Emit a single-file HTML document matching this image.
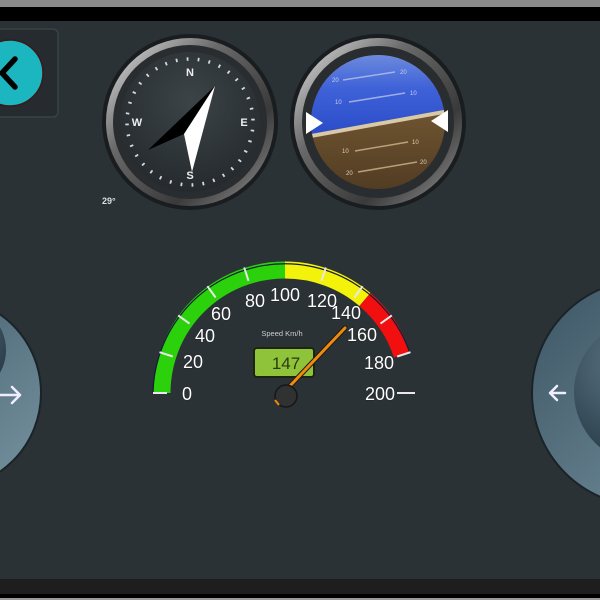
<!DOCTYPE html>
<html><head><style>
html,body{margin:0;padding:0;width:600px;height:600px;overflow:hidden;background:#2a3236;}
svg{display:block}
text{font-family:"Liberation Sans",sans-serif}
</style></head><body>
<svg width="600" height="600" viewBox="0 0 600 600" xmlns="http://www.w3.org/2000/svg">
<defs>
<linearGradient id="bez" x1="0" y1="0" x2="1" y2="1">
<stop offset="0" stop-color="#e8e8e8"/><stop offset="0.35" stop-color="#6a6a6a"/><stop offset="0.7" stop-color="#3a3a3a"/><stop offset="1" stop-color="#9a9a9a"/>
</linearGradient>
<radialGradient id="dial" cx="0.5" cy="0.35" r="0.7">
<stop offset="0" stop-color="#3d4447"/><stop offset="1" stop-color="#22282b"/>
</radialGradient>
<linearGradient id="sky" x1="0" y1="0" x2="0" y2="1">
<stop offset="0" stop-color="#7f9ce0"/><stop offset="0.5" stop-color="#3f62d8"/><stop offset="1" stop-color="#2a4bc8"/>
</linearGradient>
<linearGradient id="gnd" x1="0" y1="0" x2="0" y2="1">
<stop offset="0" stop-color="#8a6a3c"/><stop offset="1" stop-color="#4a3620"/>
</linearGradient>
<linearGradient id="joy" x1="0" y1="0" x2="1" y2="1">
<stop offset="0" stop-color="#3c5564"/><stop offset="1" stop-color="#7793a0"/>
</linearGradient>
<radialGradient id="knob" cx="0.4" cy="0.3" r="0.8">
<stop offset="0" stop-color="#5d7786"/><stop offset="1" stop-color="#223440"/>
</radialGradient>
<clipPath id="attc"><circle cx="378" cy="122" r="67"/></clipPath>
</defs>
<rect x="0" y="0" width="600" height="7" fill="#8a8a8a"/>
<rect x="0" y="7" width="600" height="14" fill="#000"/>
<rect x="0" y="579" width="600" height="21" fill="#1e1e1e"/>
<rect x="0" y="594" width="600" height="4" fill="#000"/>
<rect x="0" y="598" width="600" height="2" fill="#999"/>

<rect x="-10" y="29" width="68" height="88" rx="5" fill="#252b2f" stroke="#3b4247" stroke-width="1.5"/>
<circle cx="10" cy="73" r="33" fill="#1bb6c0" stroke="#3a1a1a" stroke-width="1.5"/>
<path d="M15 59 L2 73 L15 87" fill="none" stroke="#000" stroke-width="5.5" stroke-linecap="round" stroke-linejoin="round"/>

<circle cx="190" cy="122" r="88" fill="#1a1d1f"/>
<circle cx="190" cy="122" r="84" fill="url(#bez)"/>
<circle cx="190" cy="122" r="77" fill="#2a2d2f"/>
<circle cx="190" cy="122" r="70" fill="url(#dial)"/>
<circle cx="190" cy="122" r="63" fill="none" stroke="#d8d8d8" stroke-width="3.5" stroke-dasharray="1.8 9.19" transform="rotate(-3 190 122)"/>
<text x="190" y="76" fill="#eee" font-size="11" font-weight="bold" text-anchor="middle">N</text>
<text x="190" y="179" fill="#eee" font-size="11" font-weight="bold" text-anchor="middle">S</text>
<text x="137" y="126" fill="#eee" font-size="11" font-weight="bold" text-anchor="middle">W</text>
<text x="244" y="126" fill="#eee" font-size="11" font-weight="bold" text-anchor="middle">E</text>
<polygon points="215,86 184,134 148,150" fill="#000"/>
<polygon points="215,86 184,134 192,172" fill="#fff"/>
<text x="102" y="204" fill="#ddd" font-size="9" font-weight="bold">29°</text>

<circle cx="378" cy="122" r="88" fill="#1a1d1f"/>
<circle cx="378" cy="122" r="84" fill="url(#bez)"/>
<circle cx="378" cy="122" r="76" fill="#2a2d2f"/>
<g clip-path="url(#attc)">
<rect x="300" y="40" width="160" height="170" fill="url(#gnd)"/>
<polygon points="300,40 460,40 460,107 300,136" fill="url(#sky)"/>
<polygon points="300,136 460,107 460,111 300,140" fill="#d8c9a8"/>
<g stroke="#b8c4e8" stroke-width="1.5" opacity="0.8">
<line x1="343" y1="80" x2="395" y2="72"/><line x1="349" y1="102" x2="405" y2="93"/>
</g>
<g fill="#c8d0ee" font-size="6"><text x="332" y="82">20</text><text x="400" y="74">20</text><text x="335" y="104">10</text><text x="410" y="95">10</text></g>
<g stroke="#d0b890" stroke-width="1.5" opacity="0.8">
<line x1="355" y1="151" x2="408" y2="142"/><line x1="358" y1="172" x2="417" y2="162"/>
</g>
<g fill="#e0d0b0" font-size="6"><text x="342" y="153">10</text><text x="412" y="144">10</text><text x="346" y="175">20</text><text x="420" y="164">20</text></g>
</g>
<polygon points="306,112 306,134 323,123" fill="#fff"/>
<polygon points="448,110 448,132 431,121" fill="#fff"/>

<path d="M162 393 A123 123 0 0 1 285 270" fill="none" stroke="#2bd10b" stroke-width="17"/>
<path d="M285 270 A123 123 0 0 1 364.9 299.5" fill="none" stroke="#f2f20a" stroke-width="17"/>
<path d="M364.9 299.5 A123 123 0 0 1 402 355" fill="none" stroke="#f20f0f" stroke-width="17"/>
<path d="M153 393 A132 132 0 0 1 409.5 352" fill="none" stroke="#151a3a" stroke-width="1.2"/>
<g stroke="#e8e8e8" stroke-width="2" transform="translate(285 393)">
<line x1="-132" y1="0" x2="-118" y2="0"/>
<line x1="-125.5" y1="-40.8" x2="-112.2" y2="-36.5" />
<line x1="-106.8" y1="-77.6" x2="-95.5" y2="-69.4"/>
<line x1="-77.6" y1="-106.8" x2="-69.4" y2="-95.5"/>
<line x1="-40.8" y1="-125.5" x2="-36.5" y2="-112.2"/>
<line x1="40.8" y1="-125.5" x2="36.5" y2="-112.2"/>
<line x1="77.6" y1="-106.8" x2="69.4" y2="-95.5"/>
<line x1="106.8" y1="-77.6" x2="95.5" y2="-69.4"/>
<line x1="125.5" y1="-40.8" x2="112.2" y2="-36.5"/>
<line x1="112" y1="0" x2="130" y2="0"/>
</g>
<g fill="#fff" font-size="18" text-anchor="middle" stroke="#111" stroke-width="0.6" paint-order="stroke">
<text x="187" y="400">0</text><text x="193" y="368">20</text><text x="205" y="342">40</text>
<text x="221" y="320">60</text><text x="255" y="307">80</text><text x="285" y="301">100</text>
<text x="322" y="307">120</text><text x="346" y="319">140</text><text x="362" y="341">160</text>
<text x="379" y="369">180</text><text x="380" y="400">200</text>
</g>
<text x="282" y="336" fill="#ccc" font-size="7.5" text-anchor="middle">Speed Km/h</text>
<rect x="254" y="348" width="60" height="29" rx="3" fill="#8fc43a" stroke="#1d2410" stroke-width="2"/>
<text x="286" y="369" fill="#2c3a10" font-size="17" text-anchor="middle">147</text>
<line x1="288" y1="388" x2="345" y2="328" stroke="#1a1a1a" stroke-width="5" stroke-linecap="round"/>
<line x1="288" y1="388" x2="345" y2="328" stroke="#f08a0a" stroke-width="3" stroke-linecap="round"/>
<circle cx="286" cy="396" r="11" fill="#2f3133" stroke="#161616" stroke-width="1.5"/>
<line x1="275" y1="400" x2="279" y2="405" stroke="#f08a0a" stroke-width="2"/>

<circle cx="-55" cy="393" r="96" fill="url(#joy)" stroke="#1a2328" stroke-width="2"/>
<circle cx="-40" cy="350" r="46" fill="url(#knob)"/>
<path d="M0 395 H20 M12 387 L20 395 L12 403" fill="none" stroke="#eef" stroke-width="2.5" stroke-linecap="round" stroke-linejoin="round"/>

<circle cx="645" cy="393" r="113" fill="url(#joy)" stroke="#1a2328" stroke-width="2"/>
<circle cx="646" cy="392" r="72" fill="url(#knob)"/>
<path d="M565 393 H550 M557 386 L550 393 L557 400" fill="none" stroke="#eef" stroke-width="2.5" stroke-linecap="round" stroke-linejoin="round"/>
</svg>
</body></html>
